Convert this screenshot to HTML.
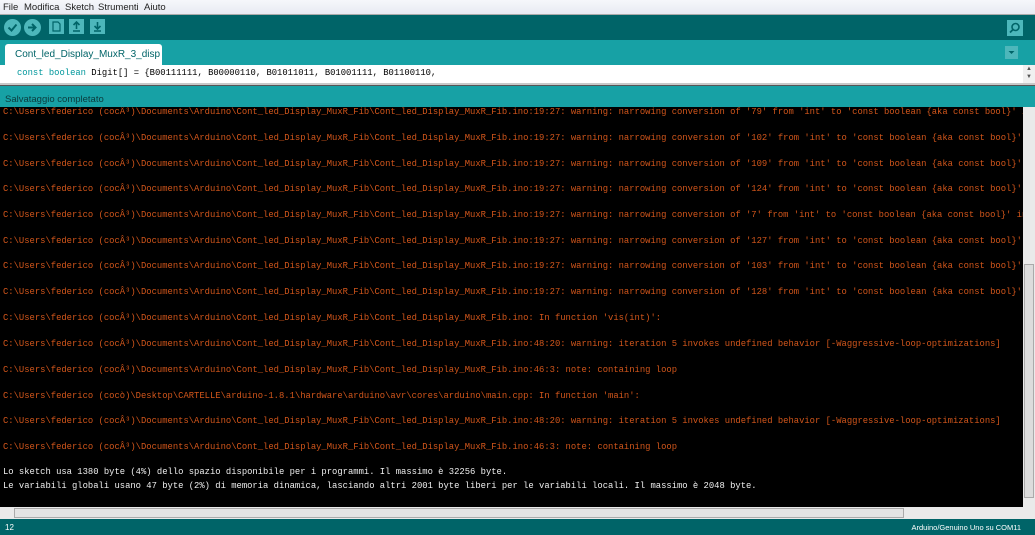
<!DOCTYPE html>
<html><head><meta charset="utf-8"><style>
*{margin:0;padding:0;box-sizing:border-box}
body{width:1035px;height:535px;overflow:hidden;position:relative;background:#000;font-family:"Liberation Sans",sans-serif}
.abs{position:absolute}
#menu{left:0;top:0;width:1035px;height:15px;background:linear-gradient(#f6f7fb,#e8eaf2);font-size:9.5px;color:#222;border-bottom:1px solid #aaa}
#menu span{position:absolute;top:2px}
#tb{left:0;top:15px;width:1035px;height:25px;background:#006468}
.cb{position:absolute;top:4px;width:17px;height:17px;border-radius:50%;background:#4db7bb}
.sb{position:absolute;top:4px;width:15px;height:15px;background:#4db7bb}
#tabs{left:0;top:40px;width:1035px;height:25px;background:#17a1a5}
#tab{left:5px;top:44px;width:157px;height:21px;background:#fff;border-radius:3px 3px 0 0;font-size:10px;color:#006468;padding:5px 0 0 10px}
#ed{left:0;top:65px;width:1035px;height:18px;background:#fff;font-family:"Liberation Mono",monospace;font-size:8.85px;color:#000;padding:3px 0 0 17px;white-space:pre}
#sep{left:0;top:83px;width:1035px;height:3px;background:#c8c8c8;border-bottom:1px solid #555}
#st{left:0;top:86px;width:1035px;height:21px;background:#17a1a5;font-size:9.5px;padding:8px 0 0 5px;color:#0b3b3d}
.l{position:absolute;left:3px;font-family:"Liberation Mono",monospace;font-size:8.85px;color:#d2561b;white-space:pre;line-height:11px}
.w{color:#eee}
#vs{left:1023px;top:107px;width:12px;height:400px;background:#eaeaea}
#hs{left:0;top:507px;width:1035px;height:12px;background:#eaeaea}
#bot{left:0;top:519px;width:1035px;height:16px;background:#006468;font-size:8px;color:#fff}
</style></head><body>
<div id="menu" class="abs"><span style="left:3px">File</span><span style="left:24px">Modifica</span><span style="left:65px">Sketch</span><span style="left:98px">Strumenti</span><span style="left:144px">Aiuto</span></div>
<div id="tb" class="abs">
<div class="cb" style="left:4px"><svg width="17" height="17"><path d="M4.5 8.5l3 3 5-6" stroke="#006468" stroke-width="2" fill="none"/></svg></div>
<div class="cb" style="left:24px"><svg width="17" height="17"><path d="M4 8.5h7M8 5l3.5 3.5L8 12" stroke="#006468" stroke-width="2" fill="none"/></svg></div>
<div class="sb" style="left:49px"><svg width="15" height="15"><path d="M4 3h5l2 2v7H4z" stroke="#006468" stroke-width="1.2" fill="none"/></svg></div>
<div class="sb" style="left:69px"><svg width="15" height="15"><path d="M7.5 3v7M4.5 6l3-3 3 3M4 12h7" stroke="#006468" stroke-width="1.6" fill="none"/></svg></div>
<div class="sb" style="left:90px"><svg width="15" height="15"><path d="M7.5 3v7M4.5 7l3 3 3-3M4 12h7" stroke="#006468" stroke-width="1.6" fill="none"/></svg></div>
<div class="sb" style="left:1007px;top:5px;width:16px;height:16px"><svg width="16" height="16"><circle cx="8.5" cy="7" r="3.5" stroke="#006468" stroke-width="1.6" fill="none"/><path d="M6 9.5l-3 3" stroke="#006468" stroke-width="1.8"/></svg></div>
</div>
<div id="tabs" class="abs"><div class="abs" style="left:1005px;top:6px;width:13px;height:13px;background:#4db7bb"><svg width="13" height="13"><path d="M3.5 5h6l-3 3z" fill="#006468"/></svg></div></div>
<div id="tab" class="abs">Cont_led_Display_MuxR_3_disp</div>
<div id="ed" class="abs"><span style="color:#00979c">const boolean</span> Digit[] = {B00111111, B00000110, B01011011, B01001111, B01100110,</div>
<div class="abs" style="left:1023px;top:65px;width:12px;height:18px;background:#f0f0f0;font-size:6px;color:#555;text-align:center;line-height:8px">▲<br>▼</div>
<div id="sep" class="abs"></div>
<div id="st" class="abs">Salvataggio completato</div>
<div class="abs" style="left:0;top:107px;width:1023px;height:400px;overflow:hidden">
<div class="l" style="top:0px">C:\Users\federico (cocÂ³)\Documents\Arduino\Cont_led_Display_MuxR_Fib\Cont_led_Display_MuxR_Fib.ino:19:27: warning: narrowing conversion of '79' from 'int' to 'const boolean {aka const bool}' in</div>
<div class="l" style="top:26px">C:\Users\federico (cocÂ³)\Documents\Arduino\Cont_led_Display_MuxR_Fib\Cont_led_Display_MuxR_Fib.ino:19:27: warning: narrowing conversion of '102' from 'int' to 'const boolean {aka const bool}' i</div>
<div class="l" style="top:52px">C:\Users\federico (cocÂ³)\Documents\Arduino\Cont_led_Display_MuxR_Fib\Cont_led_Display_MuxR_Fib.ino:19:27: warning: narrowing conversion of '109' from 'int' to 'const boolean {aka const bool}' i</div>
<div class="l" style="top:77px">C:\Users\federico (cocÂ³)\Documents\Arduino\Cont_led_Display_MuxR_Fib\Cont_led_Display_MuxR_Fib.ino:19:27: warning: narrowing conversion of '124' from 'int' to 'const boolean {aka const bool}' i</div>
<div class="l" style="top:103px">C:\Users\federico (cocÂ³)\Documents\Arduino\Cont_led_Display_MuxR_Fib\Cont_led_Display_MuxR_Fib.ino:19:27: warning: narrowing conversion of '7' from 'int' to 'const boolean {aka const bool}' in</div>
<div class="l" style="top:129px">C:\Users\federico (cocÂ³)\Documents\Arduino\Cont_led_Display_MuxR_Fib\Cont_led_Display_MuxR_Fib.ino:19:27: warning: narrowing conversion of '127' from 'int' to 'const boolean {aka const bool}' i</div>
<div class="l" style="top:154px">C:\Users\federico (cocÂ³)\Documents\Arduino\Cont_led_Display_MuxR_Fib\Cont_led_Display_MuxR_Fib.ino:19:27: warning: narrowing conversion of '103' from 'int' to 'const boolean {aka const bool}' i</div>
<div class="l" style="top:180px">C:\Users\federico (cocÂ³)\Documents\Arduino\Cont_led_Display_MuxR_Fib\Cont_led_Display_MuxR_Fib.ino:19:27: warning: narrowing conversion of '128' from 'int' to 'const boolean {aka const bool}' i</div>
<div class="l" style="top:206px">C:\Users\federico (cocÂ³)\Documents\Arduino\Cont_led_Display_MuxR_Fib\Cont_led_Display_MuxR_Fib.ino: In function 'vis(int)':</div>
<div class="l" style="top:232px">C:\Users\federico (cocÂ³)\Documents\Arduino\Cont_led_Display_MuxR_Fib\Cont_led_Display_MuxR_Fib.ino:48:20: warning: iteration 5 invokes undefined behavior [-Waggressive-loop-optimizations]</div>
<div class="l" style="top:258px">C:\Users\federico (cocÂ³)\Documents\Arduino\Cont_led_Display_MuxR_Fib\Cont_led_Display_MuxR_Fib.ino:46:3: note: containing loop</div>
<div class="l" style="top:284px">C:\Users\federico (cocò)\Desktop\CARTELLE\arduino-1.8.1\hardware\arduino\avr\cores\arduino\main.cpp: In function 'main':</div>
<div class="l" style="top:309px">C:\Users\federico (cocÂ³)\Documents\Arduino\Cont_led_Display_MuxR_Fib\Cont_led_Display_MuxR_Fib.ino:48:20: warning: iteration 5 invokes undefined behavior [-Waggressive-loop-optimizations]</div>
<div class="l" style="top:335px">C:\Users\federico (cocÂ³)\Documents\Arduino\Cont_led_Display_MuxR_Fib\Cont_led_Display_MuxR_Fib.ino:46:3: note: containing loop</div>
<div class="l w" style="top:360px">Lo sketch usa 1380 byte (4%) dello spazio disponibile per i programmi. Il massimo è 32256 byte.</div>
<div class="l w" style="top:374px">Le variabili globali usano 47 byte (2%) di memoria dinamica, lasciando altri 2001 byte liberi per le variabili locali. Il massimo è 2048 byte.</div>
</div>
<div id="vs" class="abs"><div class="abs" style="left:1px;top:157px;width:10px;height:234px;background:#dcdcdc;border:1px solid #aaa"></div></div>
<div id="hs" class="abs"><div class="abs" style="left:14px;top:1px;width:890px;height:10px;background:#e4e4e4;border:1px solid #aaa"></div></div>
<div id="bot" class="abs"><span class="abs" style="left:5px;top:4px">12</span><span class="abs" style="right:14px;top:4px;font-size:7.5px">Arduino/Genuino Uno su COM11</span></div>
</body></html>
